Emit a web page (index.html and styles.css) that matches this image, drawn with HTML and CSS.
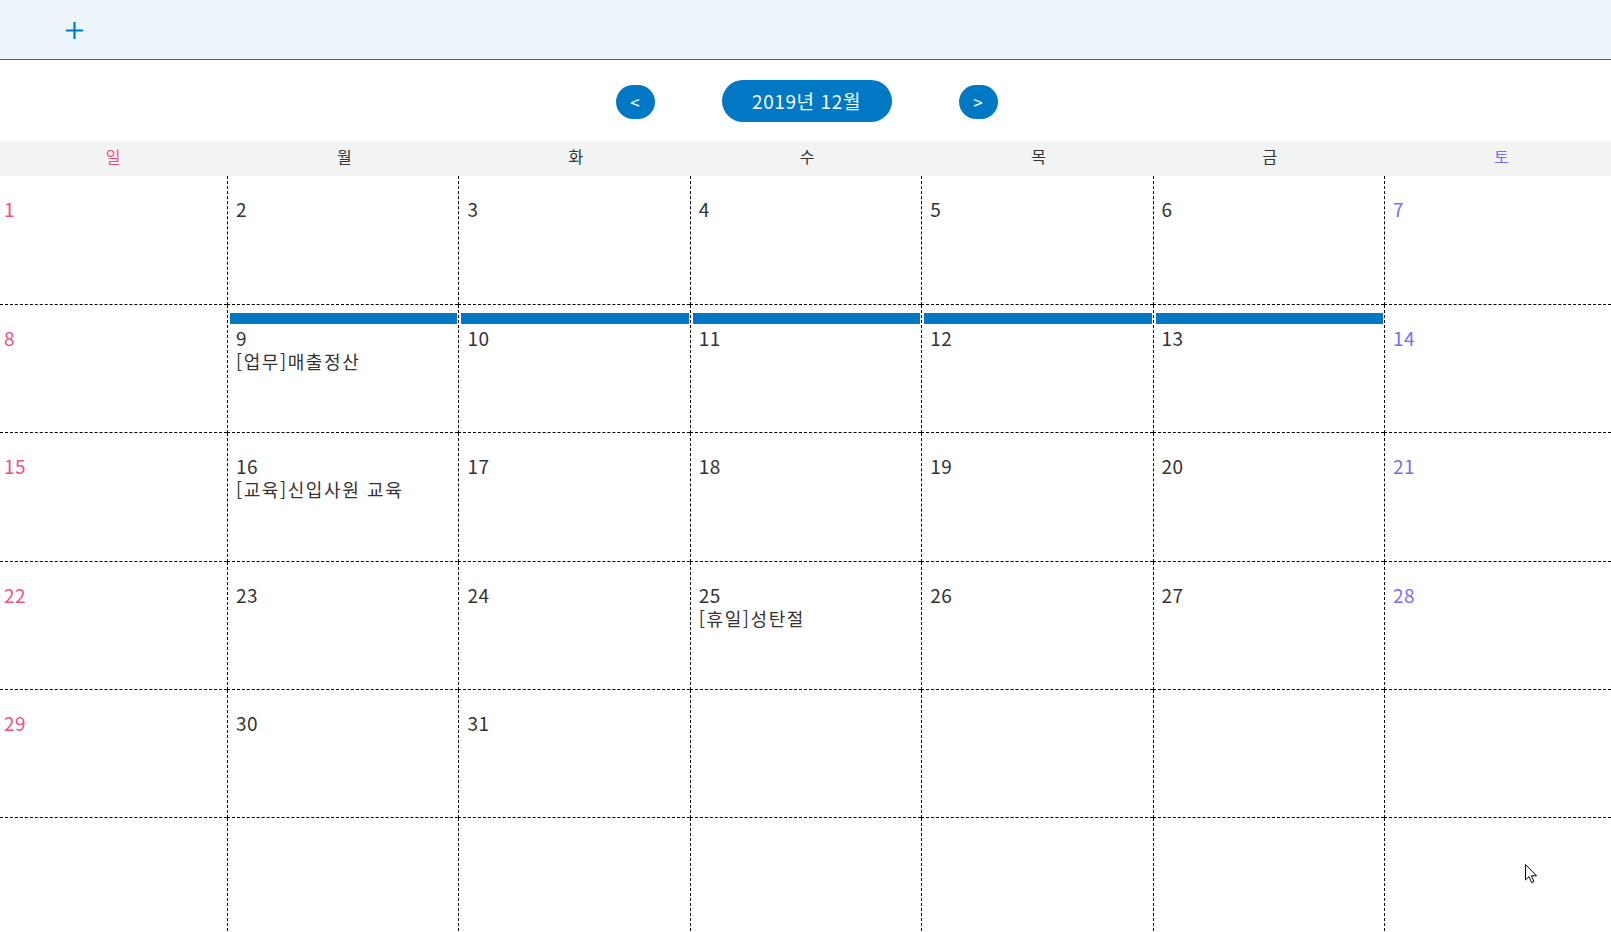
FILE: index.html
```html
<!DOCTYPE html>
<html lang="ko">
<head>
    <meta charset="UTF-8">
    <meta name="viewport" content="width=device-width, initial-scale=1.0">
    <title>일정 달력</title>
    <link rel="stylesheet" href="styles.css">
</head>
<body>
    <div class="top-bar">
        <button class="add-btn" aria-label="일정 추가">
            <svg viewBox="0 0 17 17" width="17" height="17">
                <path d="M8.5 0v17M0 8.5h17" stroke="currentColor" stroke-width="2.2" fill="none"></path>
            </svg>
        </button>
    </div>

    <div class="month-nav">
        <button class="nav-btn">&lt;</button>
        <div class="month-label">2019년 12월</div>
        <button class="nav-btn">&gt;</button>
    </div>

    <div class="week-head">
        <div class="sun">일</div>
        <div>월</div>
        <div>화</div>
        <div>수</div>
        <div>목</div>
        <div>금</div>
        <div class="sat">토</div>
    </div>

    <div class="calendar">
        <!-- week 1 -->
        <div class="cell sun"><div class="lane"></div><div class="num">1</div></div>
        <div class="cell"><div class="lane"></div><div class="num">2</div></div>
        <div class="cell"><div class="lane"></div><div class="num">3</div></div>
        <div class="cell"><div class="lane"></div><div class="num">4</div></div>
        <div class="cell"><div class="lane"></div><div class="num">5</div></div>
        <div class="cell"><div class="lane"></div><div class="num">6</div></div>
        <div class="cell sat"><div class="lane"></div><div class="num">7</div></div>

        <!-- week 2 -->
        <div class="cell sun"><div class="lane"></div><div class="num">8</div></div>
        <div class="cell"><div class="lane bar"></div><div class="num">9</div><div class="event">[업무]매출정산</div></div>
        <div class="cell"><div class="lane bar"></div><div class="num">10</div></div>
        <div class="cell"><div class="lane bar"></div><div class="num">11</div></div>
        <div class="cell"><div class="lane bar"></div><div class="num">12</div></div>
        <div class="cell"><div class="lane bar"></div><div class="num">13</div></div>
        <div class="cell sat"><div class="lane"></div><div class="num">14</div></div>

        <!-- week 3 -->
        <div class="cell sun"><div class="lane"></div><div class="num">15</div></div>
        <div class="cell"><div class="lane"></div><div class="num">16</div><div class="event">[교육]신입사원 교육</div></div>
        <div class="cell"><div class="lane"></div><div class="num">17</div></div>
        <div class="cell"><div class="lane"></div><div class="num">18</div></div>
        <div class="cell"><div class="lane"></div><div class="num">19</div></div>
        <div class="cell"><div class="lane"></div><div class="num">20</div></div>
        <div class="cell sat"><div class="lane"></div><div class="num">21</div></div>

        <!-- week 4 -->
        <div class="cell sun"><div class="lane"></div><div class="num">22</div></div>
        <div class="cell"><div class="lane"></div><div class="num">23</div></div>
        <div class="cell"><div class="lane"></div><div class="num">24</div></div>
        <div class="cell"><div class="lane"></div><div class="num">25</div><div class="event">[휴일]성탄절</div></div>
        <div class="cell"><div class="lane"></div><div class="num">26</div></div>
        <div class="cell"><div class="lane"></div><div class="num">27</div></div>
        <div class="cell sat"><div class="lane"></div><div class="num">28</div></div>

        <!-- week 5 -->
        <div class="cell sun"><div class="lane"></div><div class="num">29</div></div>
        <div class="cell"><div class="lane"></div><div class="num">30</div></div>
        <div class="cell"><div class="lane"></div><div class="num">31</div></div>
        <div class="cell"></div>
        <div class="cell"></div>
        <div class="cell"></div>
        <div class="cell sat"></div>

        <!-- week 6 -->
        <div class="cell sun"></div>
        <div class="cell"></div>
        <div class="cell"></div>
        <div class="cell"></div>
        <div class="cell"></div>
        <div class="cell"></div>
        <div class="cell sat"></div>
    </div>

    <svg class="cursor" viewBox="0 0 13 20" width="13" height="20">
        <path d="M0.5 0.5 L0.5 16 L4 12.6 L6.6 18.6 L9 17.6 L6.5 11.8 L11.5 11.8 Z" fill="#fff" stroke="#000" stroke-width="1"></path>
    </svg>
</body>
</html>
```

FILE: styles.css
```css
:root {
    --blue: #0078c4;
    --header-bg: #ecf4fb;
    --week-bg: #f2f4f4;
    --text: #333333;
    --sun: #ef4f86;
    --sat: #7a6cf2;
    --line: 1px dashed #000;
}

html, body {
    overflow: hidden;
}

body {
    margin: 0;
    background: #fff;
    color: var(--text);
    font-family: "Noto Sans CJK KR", "Noto Sans", sans-serif;
}

button {
    font-family: inherit;
    cursor: pointer;
}

.top-bar {
    height: 60px;
    box-sizing: border-box;
    background-color: var(--header-bg);
    border-bottom: 1px solid var(--blue);
    display: flex;
    align-items: center;
    padding-left: 66px;
}

.add-btn {
    background: none;
    border: none;
    padding: 0;
    color: var(--blue);
    display: flex;
    margin-top: 1px;
}

.month-nav {
    height: 81px;
    display: flex;
    justify-content: center;
    align-items: center;
    gap: 67px;
    padding-left: 2px;
}

.nav-btn {
    width: 39px;
    height: 34px;
    border: none;
    border-radius: 17px;
    background-color: var(--blue);
    color: #fff;
    font-size: 17px;
    line-height: 34px;
    padding: 0;
    margin-top: 2px;
}

.month-label {
    width: 170px;
    height: 42px;
    border-radius: 21px;
    background-color: var(--blue);
    color: #fff;
    font-size: 19px;
    line-height: 41px;
    text-align: center;
    letter-spacing: 0.6px;
}

/* header row is a bit wider than the day grid and shifted left */
.week-head {
    display: grid;
    grid-template-columns: repeat(7, 231.4px);
    margin-left: -2.7px;
    height: 35px;
    background-color: var(--week-bg);
    font-size: 16px;
    line-height: 30px;
    text-align: center;
}

.week-head .sun { color: var(--sun); }
.week-head .sat { color: var(--sat); }

.calendar {
    display: grid;
    grid-template-columns: 227px repeat(5, 231.4px) 1fr;
    grid-template-rows: 129px;
    grid-auto-rows: 128.3px;
}

.cell {
    border-left: var(--line);
    border-bottom: var(--line);
    padding: 8px 1px 0 2px;
    min-width: 0;
}

.cell.sun {
    border-left: none;
    padding-left: 1px;
}

.lane {
    height: 11px;
}

.lane.bar {
    background-color: var(--blue);
}

.num {
    margin-top: 4px;
    padding-left: 6px;
    font-size: 19px;
    line-height: 20px;
    letter-spacing: 0.5px;
}

.cell.sun .num {
    padding-left: 3px;
    color: var(--sun);
}

.cell.sat .num {
    color: var(--sat);
}

.event {
    margin-top: 3px;
    padding-left: 6px;
    font-size: 18px;
    line-height: 20px;
    letter-spacing: 1.6px;
    white-space: nowrap;
}

.cursor {
    position: fixed;
    left: 1525px;
    top: 864px;
}
```
